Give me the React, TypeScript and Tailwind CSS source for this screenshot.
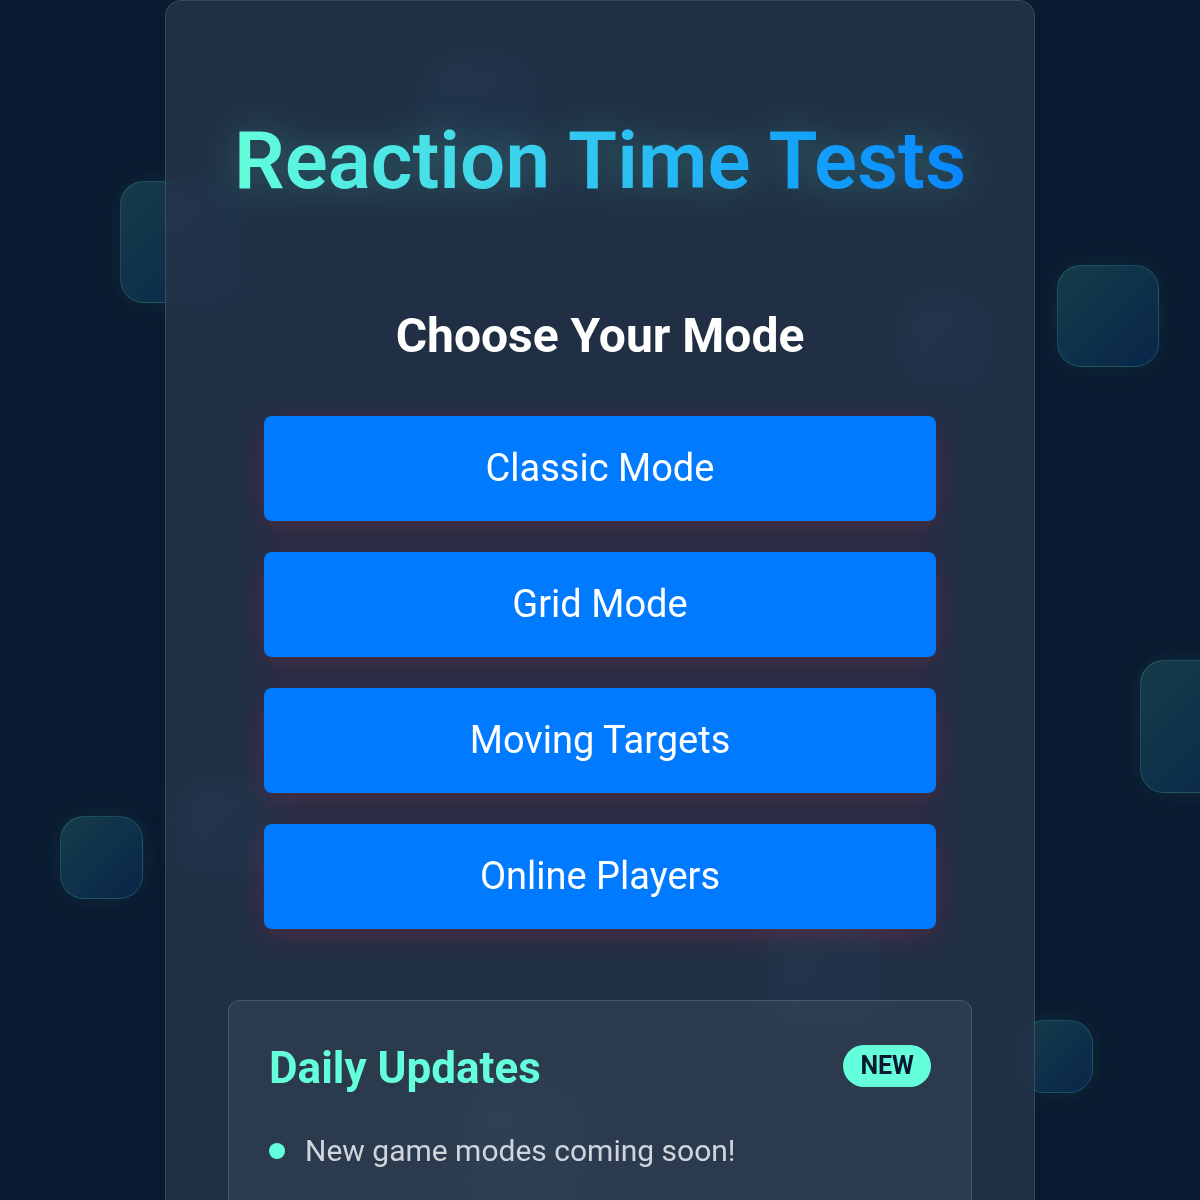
import React from "react";

const squares = [
  { l: "left-[120px]", t: "top-[181px]", s: "w-[122px] h-[122px]" },
  { l: "left-[1057px]", t: "top-[265px]", s: "w-[102px] h-[102px]" },
  { l: "left-[1140px]", t: "top-[660px]", s: "w-[133px] h-[133px]" },
  { l: "left-[60px]", t: "top-[816px]", s: "w-[83px] h-[83px]" },
  { l: "left-[1020px]", t: "top-[1020px]", s: "w-[73px] h-[73px]" },
  { l: "left-[425px]", t: "top-[55px]", s: "w-[110px] h-[110px]" },
  { l: "left-[900px]", t: "top-[295px]", s: "w-[90px] h-[90px]" },
  { l: "left-[178px]", t: "top-[780px]", s: "w-[95px] h-[95px]" },
  { l: "left-[770px]", t: "top-[915px]", s: "w-[110px] h-[110px]" },
  { l: "left-[470px]", t: "top-[1090px]", s: "w-[110px] h-[110px]" },
];

const modes = ["Classic Mode", "Grid Mode", "Moving Targets", "Online Players"];

export default function App() {
  return (
    <div
      className="relative w-[1200px] h-[1200px] overflow-hidden bg-[#0a192f]"
      style={{ fontFamily: "Roboto, 'Noto Sans', sans-serif" }}
    >
      {squares.map((q, i) => (
        <div
          key={i}
          className={`absolute ${q.l} ${q.t} ${q.s} rounded-[24px] border border-[rgba(100,255,218,0.16)] bg-gradient-to-br from-[rgba(100,255,218,0.15)] to-[rgba(10,132,255,0.13)] shadow-[0_0_30px_rgba(100,255,218,0.08)]`}
        />
      ))}

      <div className="relative mx-auto w-[870px] min-h-[1260px] rounded-t-[16px] border border-[rgba(255,255,255,0.12)] bg-[rgba(38,52,74,0.8)] backdrop-blur-[14px] px-[62px] pt-[112px]">
        <h1 className="text-center text-[80px] leading-[96px] font-semibold bg-gradient-to-r from-[#64ffda] to-[#0a84ff] bg-clip-text text-transparent [filter:drop-shadow(0_0_20px_rgba(100,255,218,0.3))]">
          Reaction Time Tests
        </h1>

        <h2 className="mt-[98px] text-center text-[48px] leading-[58px] font-bold text-white">
          Choose Your Mode
        </h2>

        <div className="mt-[51px] mx-[36px] flex flex-col gap-[31px]">
          {modes.map((m) => (
            <button
              key={m}
              className="h-[105px] w-full rounded-[8px] bg-[#007bff] text-white text-[38px] font-normal shadow-[0_6px_28px_rgba(255,40,90,0.22)]"
            >
              {m}
            </button>
          ))}
        </div>

        <div className="mt-[71px] rounded-[12px] border border-[rgba(255,255,255,0.15)] bg-[rgba(255,255,255,0.06)] px-[40px] pt-[41px] pb-[40px]">
          <div className="flex items-center justify-between">
            <h3 className="text-[44px] leading-[52px] font-bold text-[#64ffda]">Daily Updates</h3>
            <span className="-mt-[4px] rounded-full bg-[#64ffda] px-[17px] h-[42px] flex items-center text-[25px] font-bold text-[#0a192f]">
              NEW
            </span>
          </div>
          <ul className="mt-[37px] flex flex-col gap-[24px]">
            <li className="flex items-center gap-[20px]">
              <span className="w-[16px] h-[16px] rounded-full bg-[#64ffda]" />
              <span className="text-[30px] leading-[40px] text-[#d1d5db]">New game modes coming soon!</span>
            </li>
          </ul>
        </div>
      </div>
    </div>
  );
}
